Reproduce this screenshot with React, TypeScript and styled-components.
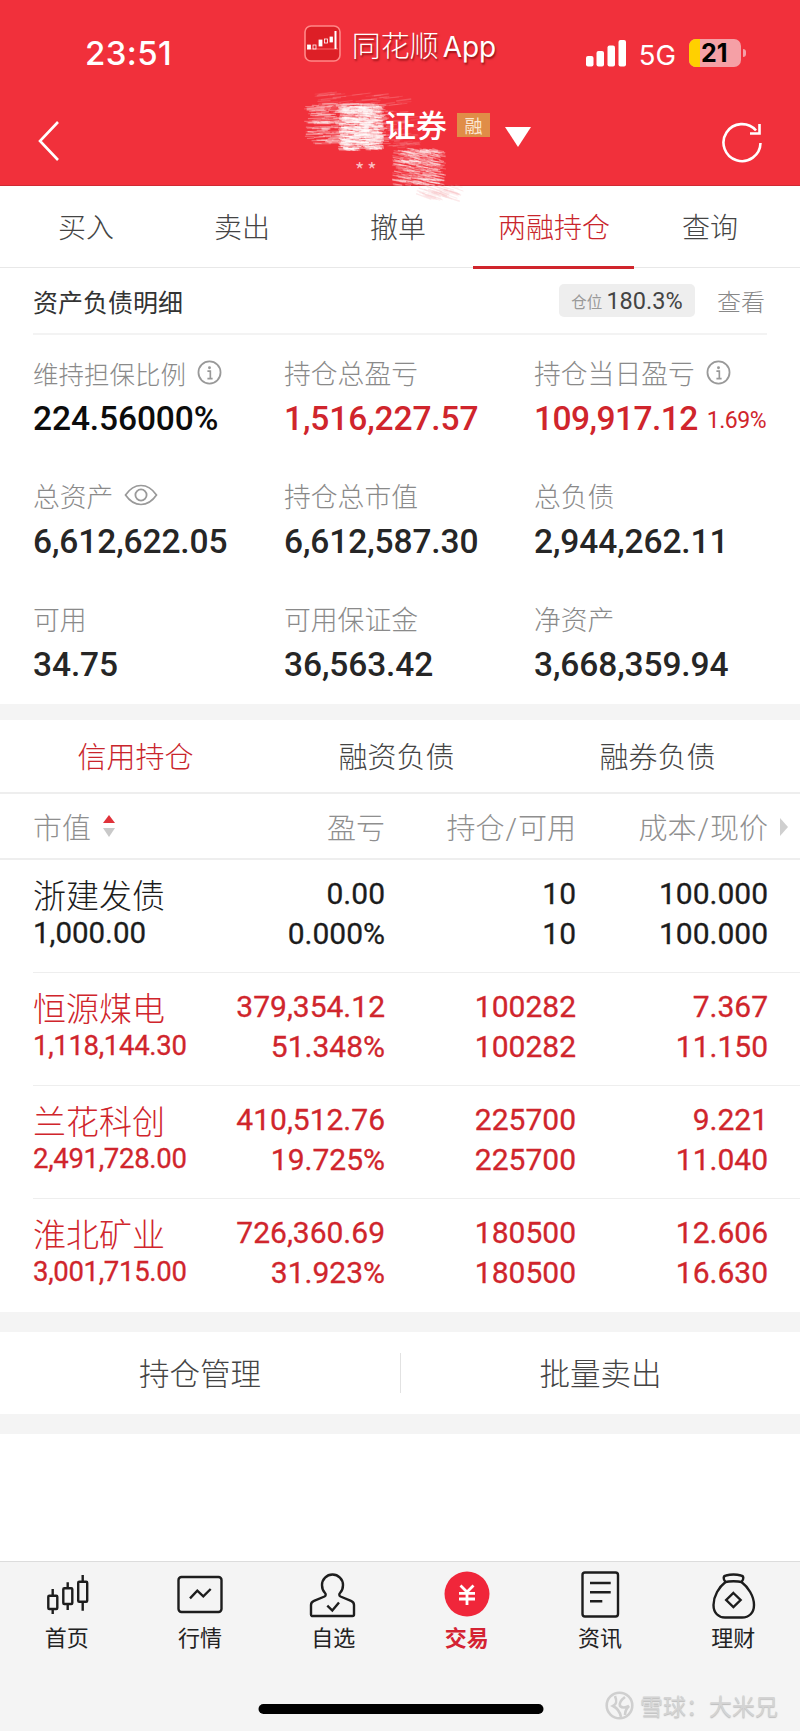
import React from 'react';
import styled, { createGlobalStyle } from 'styled-components';

const CJK = `"Noto Sans CJK SC", "Noto Sans", sans-serif`;
const NUM = `Roboto, "Noto Sans CJK SC", sans-serif`;
const RED = '#d0252c';

const Global = createGlobalStyle`
  html, body { margin: 0; padding: 0; background: #fff; }
  * { box-sizing: border-box; }
  body { font-family: ${CJK}; }
`;

const Page = styled.div`
  width: 800px;
  height: 1731px;
  display: flex;
  flex-direction: column;
  position: relative;
  overflow: hidden;
  background: #fff;
`;

/* ---------- header ---------- */
const Header = styled.header`
  height: 186px;
  background: #f1303b;
  border-bottom: 1px solid #cf2a33;
  color: #fff;
  position: relative;
`;
const StatusBar = styled.div`
  height: 90px;
  padding: 25px 54px 0 54px;
  display: grid;
  grid-template-columns: 1fr auto 1fr;
  align-items: start;
`;
const Time = styled.div`
  font-family: Inter, sans-serif;
  font-weight: 500;
  font-size: 33px;
  letter-spacing: 0.4px;
  line-height: 40px;
  margin: 8px 0 0 31px;
`;
const AppName = styled.div`
  display: flex;
  align-items: center;
  gap: 11px;
  height: 37px;
  font-size: 29px;
  font-weight: 300;
  white-space: nowrap;
  text-shadow: 1px 2px 2px rgba(90, 0, 0, 0.6);
`;
const AppLatin = styled.span`
  font-family: Inter, sans-serif;
  margin-left: -4px;
  font-size: 28px;
  font-weight: 400;
`;
const StatusRight = styled.div`
  display: flex;
  justify-content: flex-end;
  align-items: center;
  height: 28px;
  margin-top: 14px;
`;
const NetLabel = styled.span`
  font-family: Inter, sans-serif;
  font-size: 27.5px;
  font-weight: 400;
  margin: 3px 13px 0 13px;
`;
const Battery = styled.div`
  width: 52px;
  height: 28px;
  border-radius: 7px;
  overflow: hidden;
  display: flex;
  background: #f5a0a6;
  position: relative;
`;
const BatteryFill = styled.div`
  width: 11px;
  background: #ffd000;
`;
const BatteryText = styled.span`
  font-family: Inter, sans-serif;
  font-size: 25px;
  font-weight: 700;
  line-height: 28px;
  color: #000;
  margin-left: 1px;
`;
const BatteryNub = styled.div`
  width: 3px;
  height: 8px;
  margin-left: 2px;
  border-radius: 0 3px 3px 0;
  background: #f5a0a6;
`;
const NavRow = styled.div`
  height: 95px;
  padding: 0 38px 0 37px;
  display: flex;
  align-items: flex-start;
`;
const BackIcon = styled.svg`
  width: 24px;
  height: 44px;
  margin-top: 29px;
  flex: none;
`;
const TitleBlock = styled.div`
  flex: 1;
  padding: 13px 0 0 324px;
  display: flex;
  flex-direction: column;
`;
const TitleLine = styled.div`
  display: flex;
  align-items: flex-start;
`;
const TitleText = styled.span`
  font-size: 31px;
  line-height: 42px;
  font-weight: 500;
  width: 62px;
  text-align: right;
  white-space: nowrap;
`;
const Badge = styled.span`
  width: 33px;
  height: 24px;
  margin: 10px 0 0 10px;
  background: #e08d47;
  font-size: 18px;
  line-height: 24px;
  text-align: center;
  color: #fbe6d0;
`;
const Caret = styled.svg`
  width: 26px;
  height: 20px;
  margin: 24px 0 0 15px;
`;
const Masked = styled.span`
  font-size: 20px;
  line-height: 20px;
  margin: 13px 0 0 -30px;
  letter-spacing: 3px;
  color: #f9c0c4;
`;
const RefreshIcon = styled.svg`
  width: 42px;
  height: 42px;
  margin: 31px -1px 0 0;
  flex: none;
`;
const Scribble = styled.svg`
  position: absolute;
  left: 296px;
  top: 88px;
  width: 180px;
  height: 114px;
  z-index: 3;
  pointer-events: none;
`;

/* ---------- top tabs ---------- */
const MainTabs = styled.nav`
  height: 82px;
  padding: 0 8px;
  display: grid;
  grid-template-columns: repeat(5, 156px);
  border-bottom: 1px solid #e8e8e8;
  background: #fff;
`;
const MainTab = styled.div<{ $active?: boolean }>`
  height: 82px;
  padding: 0 0 2px;
  display: flex;
  align-items: center;
  justify-content: center;
  font-size: 28px;
  font-weight: 300;
  color: ${p => (p.$active ? '#c9252c' : '#444')};
  position: relative;
  ${p => (p.$active ? `&::after { content: ''; position: absolute; left: -3px; right: -2px; bottom: -1px; height: 3px; background: ${RED}; }` : '')}
`;

/* ---------- summary ---------- */
const SummaryHead = styled.div`
  height: 67px;
  margin: 0 33px;
  padding-right: 2px;
  display: flex;
  align-items: center;
  border-bottom: 2px solid #f3f3f3;
`;
const SummaryTitle = styled.div`
  flex: 1;
  font-size: 25px;
  color: #333;
`;
const Pill = styled.div`
  width: 136px;
  height: 33px;
  margin-right: 22px;
  border-radius: 5px;
  background: #eee;
  display: flex;
  align-items: center;
  justify-content: center;
  gap: 4px;
  color: #444;
  font-family: ${NUM};
  font-size: 23.5px;
`;
const PillTag = styled.span`
  font-family: ${CJK};
  font-size: 15.5px;
  color: #999;
`;
const ViewLink = styled.div`
  font-size: 24px;
  font-weight: 300;
  color: #888;
`;
const StatGrid = styled.section`
  padding: 19px 0 17px 33px;
  display: grid;
  grid-template-columns: 251px 250px 266px;
  row-gap: 37.3px;
`;
const Stat = styled.div`
  display: flex;
  flex-direction: column;
  gap: 6px;
`;
const StatLabel = styled.div<{ $fit?: boolean }>`
  height: 36px;
  display: flex;
  align-items: center;
  gap: 11px;
  font-size: ${p => (p.$fit ? 25.5 : 26.8)}px;
  font-weight: 300;
  color: #8a8a8a;
  white-space: nowrap;
`;
const StatValue = styled.div<{ $tone?: 'red' | 'black'; $fit?: boolean }>`
  height: 44px;
  display: flex;
  align-items: center;
  gap: 9px;
  font-family: ${NUM};
  font-weight: 500;
  font-size: 33.5px;
  letter-spacing: ${p => (p.$fit ? -0.55 : -0.1)}px;
  white-space: nowrap;
  color: ${p => (p.$tone === 'red' ? RED : p.$tone === 'black' ? '#0c0c0c' : '#262626')};
`;
const StatSub = styled.span`
  font-size: 23px;
  font-weight: 400;
  letter-spacing: -0.4px;
  margin-top: 4px;
`;
const GrayBand = styled.div<{ $h: number }>`
  height: ${p => p.$h}px;
  background: #f4f4f4;
  flex: none;
`;

/* ---------- positions ---------- */
const SubTabs = styled.div`
  height: 74px;
  padding: 0 5px;
  display: grid;
  grid-template-columns: repeat(3, 261px);
  border-bottom: 2px solid #eee;
`;
const SubTab = styled.div<{ $active?: boolean }>`
  display: flex;
  align-items: center;
  justify-content: center;
  padding-bottom: 1px;
  font-size: 29px;
  font-weight: 300;
  color: ${p => (p.$active ? '#c9252c' : '#444')};
`;
const Cols = `170px 182px 191px 192px`;
const TableHead = styled.div`
  height: 66px;
  padding-left: 33px;
  display: grid;
  grid-template-columns: ${Cols};
  align-items: center;
  position: relative;
  border-bottom: 2px solid #eee;
  font-size: 29px;
  font-weight: 300;
  color: #8f8f8f;
`;
const HeadFirst = styled.div`
  display: flex;
  align-items: center;
  gap: 11px;
`;
const HeadCell = styled.div`
  text-align: right;
  white-space: nowrap;
`;
const Slash = styled.span`
  font-family: ${NUM};
  margin: 0 1px;
`;
const SortIcon = styled.svg`
  width: 14px;
  height: 24px;
`;
const MoreIcon = styled.svg`
  position: absolute;
  left: 779px;
  top: 24px;
  width: 10px;
  height: 18px;
`;
const Row = styled.div<{ $red?: boolean; $last?: boolean }>`
  height: 113px;
  margin-left: 33px;
  padding-top: 14px;
  display: grid;
  grid-template-columns: ${Cols};
  grid-template-rows: 40px 40px;
  align-items: center;
  border-bottom: ${p => (p.$last ? 'none' : '1px solid #eee')};
  color: ${p => (p.$red ? RED : '#1c1c1c')};
  font-family: ${NUM};
  font-size: 30px;
  font-weight: 400;
  -webkit-text-stroke: 0.3px currentColor;
`;
const Name = styled.div`
  font-family: ${CJK};
  font-size: 33px;
  font-weight: 300;
  white-space: nowrap;
  -webkit-text-stroke: 0;
`;
const SubValue = styled.div<{ $long?: boolean }>`
  font-size: ${p => (p.$long ? 27.5 : 29.5)}px;
  letter-spacing: ${p => (p.$long ? -0.3 : 0)}px;
  white-space: nowrap;
  margin-top: -2px;
`;
const Num = styled.div`
  text-align: right;
  white-space: nowrap;
`;

/* ---------- actions ---------- */
const Actions = styled.div`
  height: 82px;
  display: grid;
  grid-template-columns: 400px 400px;
  align-items: center;
`;
const Action = styled.div<{ $divided?: boolean }>`
  height: 40px;
  display: flex;
  align-items: center;
  justify-content: center;
  padding-bottom: 2px;
  font-size: 30.5px;
  font-weight: 300;
  color: #444;
  border-left: ${p => (p.$divided ? '1px solid #e2e2e2' : 'none')};
`;
const Spacer = styled.div`
  flex: 1;
`;

/* ---------- bottom bar ---------- */
const BottomBar = styled.footer`
  height: 170px;
  background: #f4f4f4;
  border-top: 1px solid #dcdcdc;
  position: relative;
  flex: none;
`;
const BottomTabs = styled.div`
  height: 142px;
  padding-top: 9px;
  display: grid;
  grid-template-columns: repeat(6, 1fr);
  align-items: start;
`;
const BottomTab = styled.div<{ $active?: boolean }>`
  display: flex;
  flex-direction: column;
  align-items: center;
  gap: 2px;
  font-size: 22px;
  line-height: 26px;
  font-weight: ${p => (p.$active ? 700 : 400)};
  color: ${p => (p.$active ? '#d42333' : '#222')};
`;
const TabIcon = styled.svg`
  width: 50px;
  height: 50px;
  display: block;
  fill: none;
  stroke: #1d1d1d;
  stroke-width: 2.4;
`;
const HomeBar = styled.div`
  width: 285px;
  height: 10px;
  margin: 0 auto;
  transform: translateX(0.5px);
  border-radius: 5px;
  background: #000;
`;
const Watermark = styled.div`
  position: absolute;
  left: 605px;
  top: 128px;
  display: flex;
  align-items: center;
  gap: 6px;
  font-size: 23px;
  line-height: 30px;
  white-space: nowrap;
  color: #d4d4d4;
  text-shadow: 0 1px 1px rgba(120, 120, 120, 0.45);
`;

/* ---------- drawings ---------- */
const InfoIcon = () => (
  <svg width="25" height="25" viewBox="0 0 24 24" fill="none">
    <circle cx="12" cy="12" r="10.6" stroke="#999" strokeWidth="1.7" />
    <circle cx="12" cy="7.4" r="1.4" fill="#999" />
    <path d="M10 10.6h2.8v7M10 17.8h5" stroke="#999" strokeWidth="1.6" />
  </svg>
);
const EyeIcon = () => (
  <svg width="34" height="24" viewBox="0 0 34 24" fill="none">
    <path d="M1.5 12C6 5.5 11 2.5 17 2.5S28 5.5 32.5 12C28 18.5 23 21.5 17 21.5S6 18.5 1.5 12Z" stroke="#999" strokeWidth="1.7" />
    <circle cx="17" cy="12" r="5.6" stroke="#999" strokeWidth="1.8" />
  </svg>
);
const Logo = () => (
  <svg width="37" height="37" viewBox="0 0 37 37" style={{ flex: 'none' }}>
    <rect x="1" y="1" width="35" height="35" rx="6" fill="#dd1f26" stroke="#f88" strokeWidth="1.6" />
    <path d="M3 24H34" stroke="#f66" strokeWidth="1" />
    <g fill="#fff" stroke="#fff" strokeWidth="0.8">
      <rect x="3.5" y="20" width="3" height="4" />
      <rect x="9" y="20" width="3" height="4" fill="none" />
      <rect x="15" y="15" width="3" height="6" />
      <rect x="20.5" y="14" width="3" height="4" fill="none" />
      <rect x="26" y="12" width="2.5" height="5" />
      <path d="M31.5 6V24" strokeWidth="2" />
    </g>
  </svg>
);

let seed = 7;
const rnd = () => {
  seed = (seed * 16807) % 2147483647;
  return seed / 2147483647;
};
type Stroke = { x1: number; y1: number; x2: number; y2: number; o: number; w: number; c: string };
const strokes: Stroke[] = [];
const addBlock = (n: number, x0: number, x1: number, y0: number, y1: number, len: number, tilt: number, o: number, c = '#fff') => {
  for (let i = 0; i < n; i++) {
    const l = len * (0.5 + rnd());
    const x = x0 + rnd() * (x1 - x0 - l);
    const y = y0 + rnd() * (y1 - y0);
    strokes.push({ x1: x, y1: y, x2: x + l, y2: y + l * tilt + rnd() * 1.2, o: o * (0.5 + rnd() * 0.7), w: 0.7 + rnd() * 0.8, c });
  }
};
addBlock(320, 8, 96, 16, 56, 12, -0.06, 0.34);
addBlock(40, 14, 120, 6, 18, 14, -0.14, 0.16);
addBlock(460, 42, 88, 18, 62, 8, -0.03, 0.55);
addBlock(60, 88, 125, 22, 60, 10, -0.1, 0.14);
addBlock(300, 96, 150, 60, 97, 10, 0.12, 0.34);
addBlock(40, 120, 168, 96, 108, 14, 0.3, 0.3, '#f6b4b8');

const sortArrowUp = 'M7 1 L13 9 H1 Z';
const sortArrowDown = 'M1 14 H13 L7 23 Z';

type RowData = { name: string; sub: string; a: string; b: string; c: string; d: string; e: string; f: string; red?: boolean; long?: boolean };
const rows: RowData[] = [
  { name: '浙建发债', sub: '1,000.00', a: '0.00', b: '0.000%', c: '10', d: '10', e: '100.000', f: '100.000' },
  { name: '恒源煤电', sub: '1,118,144.30', a: '379,354.12', b: '51.348%', c: '100282', d: '100282', e: '7.367', f: '11.150', red: true, long: true },
  { name: '兰花科创', sub: '2,491,728.00', a: '410,512.76', b: '19.725%', c: '225700', d: '225700', e: '9.221', f: '11.040', red: true, long: true },
  { name: '淮北矿业', sub: '3,001,715.00', a: '726,360.69', b: '31.923%', c: '180500', d: '180500', e: '12.606', f: '16.630', red: true, long: true },
];

export default function App() {
  return (
    <Page>
      <Global />
      <Header>
        <StatusBar>
          <Time>23:51</Time>
          <AppName>
            <Logo />
            <span>同花顺<AppLatin> App</AppLatin></span>
          </AppName>
          <StatusRight>
            <svg width="40" height="27" viewBox="0 0 40 27" fill="#fff">
              <rect x="0" y="16" width="7.5" height="10.5" rx="2" />
              <rect x="10.5" y="11" width="7.5" height="15.5" rx="2" />
              <rect x="21.5" y="5.5" width="7.5" height="21" rx="2" />
              <rect x="32.5" y="0" width="7.5" height="26.5" rx="2" />
            </svg>
            <NetLabel>5G</NetLabel>
            <Battery>
              <BatteryFill />
              <BatteryText>21</BatteryText>
            </Battery>
            <BatteryNub />
          </StatusRight>
        </StatusBar>
        <NavRow>
          <BackIcon viewBox="0 0 24 44" fill="none">
            <path d="M21 3 L3 22 L21 41" stroke="#fff" strokeWidth="2.6" />
          </BackIcon>
          <TitleBlock>
            <TitleLine>
              <TitleText>证券</TitleText>
              <Badge>融</Badge>
              <Caret viewBox="0 0 26 20">
                <path d="M0 0H26L13 20Z" fill="#fff" />
              </Caret>
            </TitleLine>
            <Masked>**</Masked>
          </TitleBlock>
          <RefreshIcon viewBox="0 0 42 42" fill="none">
            <path d="M35 9.5 A18.5 18.5 0 1 0 39.5 22" stroke="#fff" strokeWidth="2.6" />
            <path d="M38.5 3 V12.5 H29" stroke="#fff" strokeWidth="2.6" />
          </RefreshIcon>
        </NavRow>
        <Scribble viewBox="0 0 180 114">
          {strokes.map((s, i) => (
            <line key={i} x1={s.x1} y1={s.y1} x2={s.x2} y2={s.y2} stroke={s.c} strokeOpacity={s.o} strokeWidth={s.w} />
          ))}
        </Scribble>
      </Header>

      <MainTabs>
        <MainTab>买入</MainTab>
        <MainTab>卖出</MainTab>
        <MainTab>撤单</MainTab>
        <MainTab $active>两融持仓</MainTab>
        <MainTab>查询</MainTab>
      </MainTabs>

      <SummaryHead>
        <SummaryTitle>资产负债明细</SummaryTitle>
        <Pill>
          <PillTag>仓位</PillTag>
          180.3%
        </Pill>
        <ViewLink>查看</ViewLink>
      </SummaryHead>

      <StatGrid>
        <Stat>
          <StatLabel $fit>维持担保比例<InfoIcon /></StatLabel>
          <StatValue $tone="black">224.56000%</StatValue>
        </Stat>
        <Stat>
          <StatLabel>持仓总盈亏</StatLabel>
          <StatValue $tone="red">1,516,227.57</StatValue>
        </Stat>
        <Stat>
          <StatLabel>持仓当日盈亏<InfoIcon /></StatLabel>
          <StatValue $tone="red" $fit>109,917.12<StatSub>1.69%</StatSub></StatValue>
        </Stat>
        <Stat>
          <StatLabel>总资产<EyeIcon /></StatLabel>
          <StatValue>6,612,622.05</StatValue>
        </Stat>
        <Stat>
          <StatLabel>持仓总市值</StatLabel>
          <StatValue>6,612,587.30</StatValue>
        </Stat>
        <Stat>
          <StatLabel>总负债</StatLabel>
          <StatValue>2,944,262.11</StatValue>
        </Stat>
        <Stat>
          <StatLabel>可用</StatLabel>
          <StatValue>34.75</StatValue>
        </Stat>
        <Stat>
          <StatLabel>可用保证金</StatLabel>
          <StatValue>36,563.42</StatValue>
        </Stat>
        <Stat>
          <StatLabel>净资产</StatLabel>
          <StatValue>3,668,359.94</StatValue>
        </Stat>
      </StatGrid>

      <GrayBand $h={16} />

      <SubTabs>
        <SubTab $active>信用持仓</SubTab>
        <SubTab>融资负债</SubTab>
        <SubTab>融券负债</SubTab>
      </SubTabs>

      <TableHead>
        <HeadFirst>
          市值
          <SortIcon viewBox="0 0 14 24">
            <path d={sortArrowUp} fill="#e0323a" />
            <path d={sortArrowDown} fill="#c9c9c9" />
          </SortIcon>
        </HeadFirst>
        <HeadCell>盈亏</HeadCell>
        <HeadCell>持仓<Slash>/</Slash>可用</HeadCell>
        <HeadCell>成本<Slash>/</Slash>现价</HeadCell>
        <MoreIcon viewBox="0 0 10 18">
          <path d="M1 0 L9 9 L1 18 Z" fill="#cfcfcf" />
        </MoreIcon>
      </TableHead>

      {rows.map((r, i) => (
        <Row key={r.name} $red={r.red} $last={i === rows.length - 1}>
          <Name>{r.name}</Name>
          <Num>{r.a}</Num>
          <Num>{r.c}</Num>
          <Num>{r.e}</Num>
          <SubValue $long={r.long}>{r.sub}</SubValue>
          <Num>{r.b}</Num>
          <Num>{r.d}</Num>
          <Num>{r.f}</Num>
        </Row>
      ))}

      <GrayBand $h={20} />
      <Actions>
        <Action>持仓管理</Action>
        <Action $divided>批量卖出</Action>
      </Actions>
      <GrayBand $h={20} />
      <Spacer />

      <BottomBar>
        <BottomTabs>
          <BottomTab>
            <TabIcon viewBox="0 0 50 50">
              <path d="M10.7 18V43M25.7 11.3V39M40.7 4V39.7" />
              <rect x="6.3" y="24.7" width="9" height="13.3" rx="1" fill="#f4f4f4" />
              <rect x="21.3" y="17.3" width="9" height="15.7" rx="1" fill="#f4f4f4" />
              <rect x="36.2" y="10.7" width="9" height="20" rx="1" fill="#f4f4f4" />
            </TabIcon>
            首页
          </BottomTab>
          <BottomTab>
            <TabIcon viewBox="0 0 50 50">
              <rect x="3.5" y="6" width="43" height="35" rx="3" />
              <path d="M15 27.3 L22.3 19.7 L28.3 25.3 L35.7 18" />
            </TabIcon>
            行情
          </BottomTab>
          <BottomTab>
            <TabIcon viewBox="0 0 50 50">
              <path d="M5 45 H44.5 A1.5 1.5 0 0 0 46 43.5 V34 C46 32 45 30.6 43 29.8 L32.5 25.5 C31 24.8 31 23 32 22 C34 20 35 17 35 14 A10.5 10.5 0 0 0 14 14 C14 17 15 20 17 22 C18 23 18 24.8 16.5 25.5 L6 29.8 C4 30.6 3 32 3 34 V43.5 A1.5 1.5 0 0 0 5 45 Z" />
              <path d="M19.3 34.7 L24.3 39.5 L31 31.5" />
            </TabIcon>
            自选
          </BottomTab>
          <BottomTab $active>
            <TabIcon viewBox="0 0 50 50">
              <circle cx="25" cy="23" r="22.5" fill="#f0263a" stroke="none" />
              <path d="M18.5 14.5 L25 21 L31.5 14.5 M17 22.3 H33 M17 28 H33 M25 21 V34" stroke="#fff" strokeWidth="2.8" />
            </TabIcon>
            交易
          </BottomTab>
          <BottomTab>
            <TabIcon viewBox="0 0 50 50">
              <rect x="7.5" y="1.5" width="35.5" height="44" rx="2.5" />
              <path d="M15 12H35.7M15 21.3H35.7M15 30.3H27.3" />
            </TabIcon>
            资讯
          </BottomTab>
          <BottomTab>
            <TabIcon viewBox="0 0 50 50">
              <path d="M17.5 11 C15 8 15 5 18 4.5 C22 3.5 29 3.5 33 4.5 C36 5 36 8 33.5 11 C30 10 21 10 17.5 11 Z" />
              <path d="M17.5 11 C11 16 5.5 25 5.5 34 C5.5 42 10.5 46.5 17 46.5 H34 C41 46.5 46 42 46 34 C46 25 40 16 33.5 11" />
              <path d="M25.4 22 L32.6 29 L25.4 36 L18.2 29 Z" />
            </TabIcon>
            理财
          </BottomTab>
        </BottomTabs>
        <HomeBar />
        <Watermark>
          <svg width="29" height="29" viewBox="0 0 29 29" fill="none" stroke="#cfcfcf" strokeWidth="2.6">
            <circle cx="14.5" cy="14.5" r="12.8" />
            <path d="M10 5 C12 10 12 13 8 15 C12 17 15 21 16 26 M20 6 C16 9 14 12 15 15 C17 17 20 17 24 15 C21 18 20 21 20 24" />
          </svg>
          雪球：大米兄
        </Watermark>
      </BottomBar>
    </Page>
  );
}
